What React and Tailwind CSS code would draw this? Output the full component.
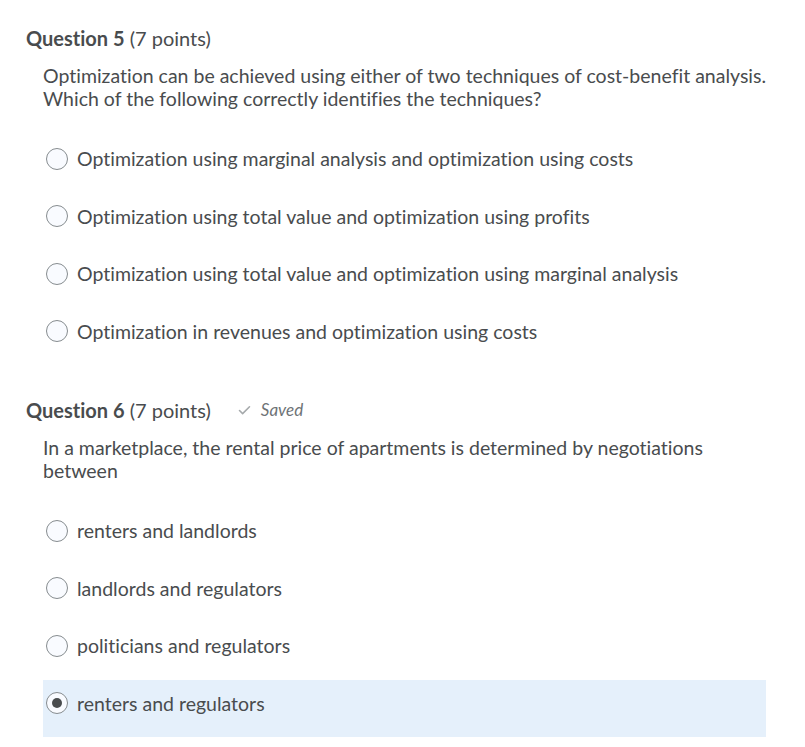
import { Check } from 'lucide-react'

const Q5 = [
  'Optimization using marginal analysis and optimization using costs',
  'Optimization using total value and optimization using profits',
  'Optimization using total value and optimization using marginal analysis',
  'Optimization in revenues and optimization using costs',
]

const Q6 = [
  'renters and landlords',
  'landlords and regulators',
  'politicians and regulators',
  'renters and regulators',
]

function Radio({ checked }) {
  return (
    <span className="w-[22px] h-[22px] rounded-full border border-[#868c8f] bg-[#f9fbff] flex items-center justify-center flex-shrink-0">
      {checked && <span className="w-[10px] h-[10px] rounded-full bg-[#494c4e]" />}
    </span>
  )
}

function Option({ label, checked }) {
  return (
    <div className={`h-[57.5px] pt-[12px] pl-[3px] ${checked ? 'bg-[#e5f0fb]' : ''}`}>
      <div className="flex items-center gap-[9px] h-[23px]">
        <Radio checked={checked} />
        <span className="text-[19.5px] leading-[23px]">{label}</span>
      </div>
    </div>
  )
}

function Title({ n, saved }) {
  return (
    <div className="flex items-center h-[26px] pl-[26px]">
      <h2 className="text-[20px] leading-[26px]">
        <span className="font-bold">Question {n}</span> (7 points)
      </h2>
      {saved && (
        <span className="flex items-center ml-[26px] text-[17px] italic text-[#6e7376]">
          <Check className="w-[15px] h-[15px] text-[#a5a9ab] mr-[9px]" strokeWidth={2.5} />
          Saved
        </span>
      )}
    </div>
  )
}

export default function App() {
  const sel = 3
  return (
    <div className="w-[805px] h-[747px] bg-white text-[#494c4e] overflow-hidden [font-variant-ligatures:none]" style={{ fontFamily: 'Lato, "Open Sans", sans-serif' }}>
      <div className="pt-[25px]">
        <Title n={5} />
        <div className="pl-[43px] pr-[39px]">
          <p className="text-[19.5px] leading-[23px] mt-[12.5px] -mr-[3px]">
            Optimization can be achieved using either of two techniques of cost-benefit analysis. Which of the following correctly identifies the techniques?
          </p>
          <div className="mt-[25.5px]">
            {Q5.map(o => <Option key={o} label={o} />)}
          </div>
        </div>
        <div className="mt-[32px]">
          <Title n={6} saved />
        </div>
        <div className="pl-[43px] pr-[39px]">
          <p className="text-[19.5px] leading-[23px] mt-[12.5px] -mr-[3px]">
            In a marketplace, the rental price of apartments is determined by negotiations between
          </p>
          <div className="mt-[25.5px]">
            {Q6.map((o, i) => <Option key={o} label={o} checked={i === sel} />)}
          </div>
        </div>
      </div>
    </div>
  )
}
